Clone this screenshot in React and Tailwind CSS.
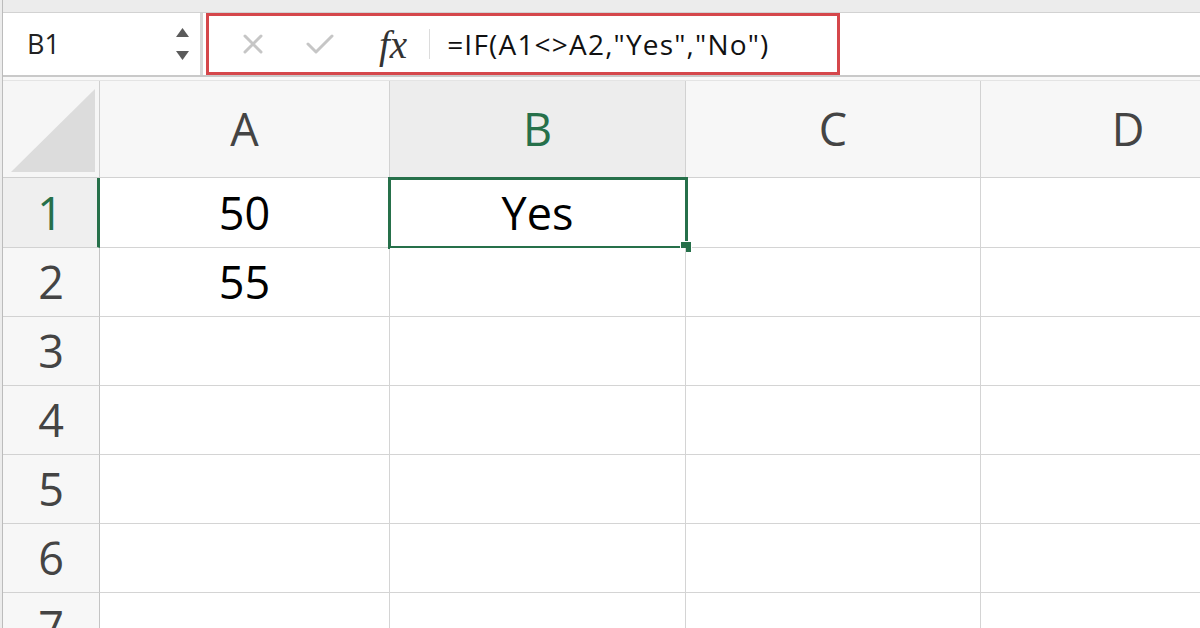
import React from "react";

const FONT = { fontFamily: '"Open Sans", "Liberation Sans", sans-serif' };

const rows = [
  { n: "1", a: "50", b: "Yes", h: "h-[70px]", active: true },
  { n: "2", a: "55", b: "", h: "h-[69px]" },
  { n: "3", a: "", b: "", h: "h-[69px]" },
  { n: "4", a: "", b: "", h: "h-[69px]" },
  { n: "5", a: "", b: "", h: "h-[69px]" },
  { n: "6", a: "", b: "", h: "h-[69px]" },
  { n: "7", a: "", b: "", h: "h-[69px]" },
];

function FormulaBar() {
  return (
    <div className="flex h-[62px] bg-white">
      {/* name box */}
      <div className="flex w-[200px] items-center justify-between border-r-[3px] border-[#d6d6d6] pl-[24px] pr-[11px]">
        <span className="text-[27px] text-[#222]">B1</span>
        <div className="flex flex-col items-center gap-[14px]">
          <svg width="13" height="9" viewBox="0 0 13 9">
            <path d="M6.5 0 L13 9 L0 9 Z" fill="#5b5b5b" />
          </svg>
          <svg width="13" height="9" viewBox="0 0 13 9">
            <path d="M0 0 L13 0 L6.5 9 Z" fill="#5b5b5b" />
          </svg>
        </div>
      </div>

      {/* formula box */}
      <div className="ml-[3px] flex w-[634px] items-center border-[3px] border-[#d5474b]">
        <div className="ml-[29px] flex w-[30px] justify-center">
          <svg width="22" height="22" viewBox="0 0 22 22">
            <path d="M3 3 L19 19 M19 3 L3 19" stroke="#c6c6c6" strokeWidth="3" strokeLinecap="round" />
          </svg>
        </div>
        <div className="ml-[35px] flex w-[34px] justify-center">
          <svg width="28" height="22" viewBox="0 0 28 22">
            <path d="M2 11 L10 19 L26 3" stroke="#c6c6c6" strokeWidth="3" fill="none" strokeLinecap="round" strokeLinejoin="round" />
          </svg>
        </div>
        <span
          className="ml-[42px] text-[39px] italic leading-none text-[#333]"
          style={{ fontFamily: '"Liberation Serif", serif' }}
        >
          fx
        </span>
        <div className="ml-[22px] h-[30px] w-px bg-[#dcdcdc]" />
        <span className="ml-[17px] text-[28px] tracking-[1.2px] text-[#111]">=IF(A1&lt;&gt;A2,"Yes","No")</span>
      </div>
      <div className="flex-1" />
    </div>
  );
}

function Corner() {
  return (
    <div className="flex h-full items-end justify-end bg-[#f6f6f6] pb-[5px] pr-[4px] border-r border-b border-[#cfcfcf]">
      <svg width="84" height="83" viewBox="0 0 84 83">
        <path d="M0 83 L84 83 L84 0 Z" fill="#dcdcdc" />
      </svg>
    </div>
  );
}

export default function App() {
  const cellText = "flex items-center justify-center text-[45px] text-black";
  return (
    <div style={FONT} className="h-[628px] w-[1200px] overflow-hidden bg-[#ececec] pl-[2px]">
      <div className="h-full border-l border-[#bcbcbc]">
        {/* top strip */}
        <div className="h-[13px] border-b border-[#d2d2d2] bg-[#ececec]" />
        <FormulaBar />
        <div className="h-[6px] border-t-[2px] border-b border-t-[#c9c9c9] border-b-[#e4e4e4] bg-[#f8f8f8]" />

        {/* grid */}
        <div className="grid grid-cols-[97px_290px_296px_295px_295px]">
          {/* header row */}
          <div className="h-[97px]">
            <Corner />
          </div>
          <div className="flex h-[97px] items-center justify-center border-r border-b border-[#d2d2d2] bg-[#f7f7f7] text-[45px] text-[#444]">
            A
          </div>
          <div className="flex h-[97px] items-center justify-center border-r border-b border-[#d2d2d2] bg-[#ededed] text-[45px] text-[#26704a]">
            B
          </div>
          <div className="flex h-[97px] items-center justify-center border-r border-b border-[#d2d2d2] bg-[#f7f7f7] text-[45px] text-[#444]">
            C
          </div>
          <div className="flex h-[97px] items-center justify-center border-r border-b border-[#d2d2d2] bg-[#f7f7f7] text-[45px] text-[#444]">
            D
          </div>

          {rows.map((r) => (
            <React.Fragment key={r.n}>
              <div
                className={`${r.h} flex items-center justify-center border-b border-[#d2d2d2] text-[45px] ${
                  r.active
                    ? "border-r-[3px] border-r-[#26704a] bg-[#efefef] text-[#26704a]"
                    : "border-r border-r-[#c4c4c4] bg-[#f7f7f7] text-[#444]"
                }`}
              >
                {r.n}
              </div>
              <div className={`${r.h} ${cellText} border-r border-b border-[#d4d4d4] bg-white`}>{r.a}</div>
              <div className={`${r.h} ${cellText} relative border-r border-b border-[#d4d4d4] bg-white`}>
                {r.b}
                {r.active && (
                  <div className="absolute -left-[2px] -top-[1px] -right-[3px] -bottom-[2px] border-[3px] border-[#26704a]">
                    <div className="absolute -bottom-[7px] -right-[7px] h-[12px] w-[12px] border border-white bg-[#26704a]" />
                  </div>
                )}
              </div>
              <div className={`${r.h} border-r border-b border-[#d4d4d4] bg-white`} />
              <div className={`${r.h} border-r border-b border-[#d4d4d4] bg-white`} />
            </React.Fragment>
          ))}
        </div>
      </div>
    </div>
  );
}
